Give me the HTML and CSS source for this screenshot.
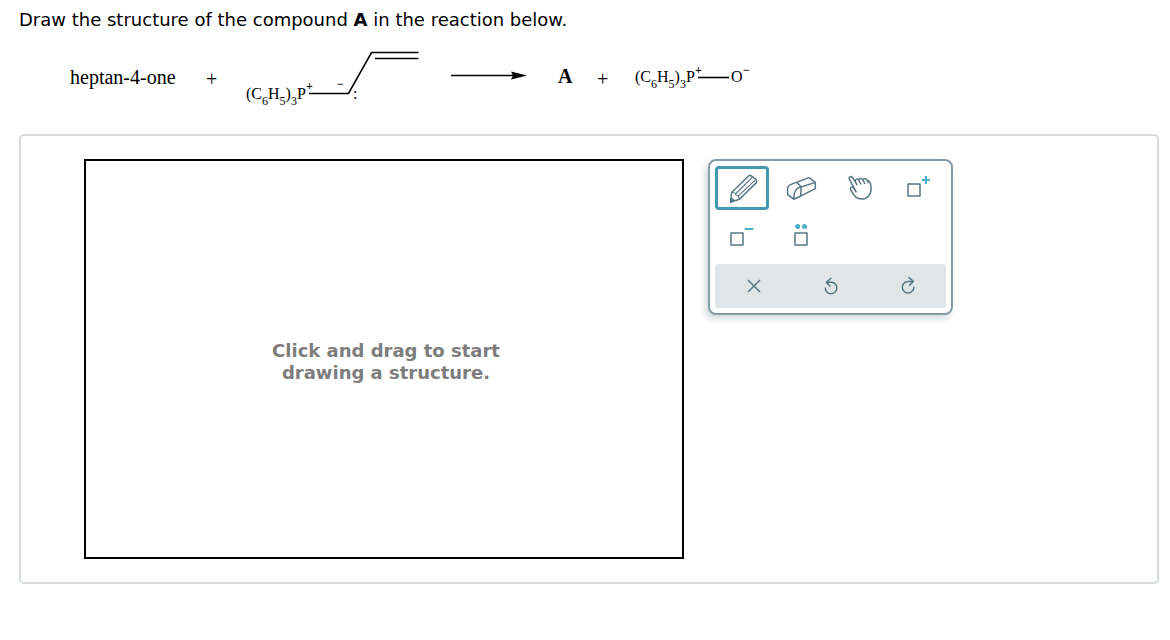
FILE: index.html
```html
<!DOCTYPE html>
<html lang="en">
<head>
    <meta charset="UTF-8">
    <meta name="viewport" content="width=device-width, initial-scale=1.0">
    <title>Draw a structure</title>
    <link rel="stylesheet" href="styles.css">
</head>
<body>
    <p class="question">Draw the structure of the compound <b>A</b> in the reaction below.</p>

    <!-- Reaction scheme -->
    <svg class="reaction" width="700" height="76" viewBox="0 0 700 76">
        <text x="10" y="44">heptan-4-one</text>
        <text x="146" y="46">+</text>

        <!-- Wittig reagent -->
        <text class="formula" x="186" y="59">(C<tspan class="sub" dy="6">6</tspan><tspan dy="-6">H</tspan><tspan class="sub" dy="6">5</tspan><tspan dy="-6">)</tspan><tspan class="sub" dy="6">3</tspan><tspan dy="-6">P</tspan></text>
        <text class="charge" x="246" y="50">+</text>
        <path class="bond" d="M249 53.5H288.5L311.5 12.5H358.5M315 18.5H358.5"/>
        <text class="charge" x="277" y="48">−</text>
        <text class="formula" x="293" y="59">:</text>

        <path class="bond" d="M391 35.5H454"/>
        <path d="M467 35.5L451 31.5L453 35.5L451 39.5Z"/>

        <text class="bold" x="498" y="43">A</text>
        <text x="537" y="46">+</text>

        <!-- Phosphine oxide -->
        <text class="formula" x="575" y="42">(C<tspan class="sub" dy="6">6</tspan><tspan dy="-6">H</tspan><tspan class="sub" dy="6">5</tspan><tspan dy="-6">)</tspan><tspan class="sub" dy="6">3</tspan><tspan dy="-6">P</tspan></text>
        <text class="charge" x="635" y="34">+</text>
        <path class="bond" d="M638 37.5H669"/>
        <text class="formula" x="671" y="42">O</text>
        <text class="charge" x="683" y="34">−</text>
    </svg>

    <main class="panel">
        <div class="canvas">
            <p>Click and drag to start<br>drawing a structure.</p>
        </div>

        <div class="toolbox">
            <div class="tools">
                <button class="tool selected" type="button" aria-label="Pencil">
                    <svg width="48" height="38" viewBox="0 0 48 38">
                        <path d="M12.5 33L13.6 23.5L30.5 7Q31.8 6 33 6.6L37.8 10.2Q39.2 12 38.4 13.6L21.5 30.3L12.5 33Z"/>
                        <path class="thin" d="M13.8 23.5Q17.5 23 17.8 26Q21.2 26.8 21.3 30.3M17.4 25L34.2 8.4M19.8 27.3L37.2 11.2"/>
                        <path class="fill" d="M12.5 33L13 29.8Q15.4 29.9 16 32Z"/>
                    </svg>
                </button>
                <button class="tool" type="button" aria-label="Eraser">
                    <svg width="48" height="38" viewBox="0 0 48 38">
                        <path d="M10.5 21Q10.5 16.6 14 15.4L32 8.6L38.3 13.4V19.7L23.5 27.2L16.7 30.2L10.8 25.6ZM19.8 13.3L24.2 18L38.3 13.4M24.2 18L23.6 27.2M24.2 18C19.5 18.5 16.4 23 16.7 30.2"/>
                    </svg>
                </button>
                <button class="tool" type="button" aria-label="Grab">
                    <svg width="48" height="38" viewBox="0 0 48 38">
                        <path d="M20.4 23.4L13.4 10.4C12.4 8 15.2 6.6 16.6 8.7L21.2 16M19.3 12.8C18.9 9.7 21.6 9.2 22.7 11.2L25 15.5M22.9 11.6C22.8 9.2 25.6 8.7 26.7 10.7L29 15M27 11.2C27.4 9.2 30.3 9.2 31.1 11.3L32.2 14.3M31.2 11.6C33.6 11.1 34.6 14 35 18C35.8 25.4 31 30.3 25.3 30C21 29.8 18.6 27.6 17 24.6L14.7 21C13.5 18.4 16 17 17.5 18.8L20.4 23.4"/>
                    </svg>
                </button>
                <button class="tool" type="button" aria-label="Positive charge">
                    <svg width="48" height="38" viewBox="0 0 48 38">
                        <rect x="13" y="15" width="12" height="12"/>
                        <path class="accent" d="M27 11H35M31 7V15"/>
                    </svg>
                </button>
                <button class="tool" type="button" aria-label="Negative charge">
                    <svg width="48" height="38" viewBox="0 0 48 38">
                        <rect x="13" y="15" width="12" height="12"/>
                        <path class="accent" d="M26.7 11H35.3"/>
                    </svg>
                </button>
                <button class="tool" type="button" aria-label="Lone pair">
                    <svg width="48" height="38" viewBox="0 0 48 38">
                        <rect x="18" y="15" width="12" height="12"/>
                        <circle class="dot" cx="20.7" cy="8.5" r="2.5"/>
                        <circle class="dot" cx="27.5" cy="8.5" r="2.5"/>
                    </svg>
                </button>
            </div>

            <div class="actions">
                <button type="button" aria-label="Clear">
                    <svg width="20" height="20" viewBox="0 0 20 20">
                        <path d="M4 4L16 16M16 4L4 16"/>
                    </svg>
                </button>
                <button type="button" aria-label="Undo">
                    <svg width="20" height="20" viewBox="0 0 20 20">
                        <path d="M10.3 2L5.3 6.2L9.3 10.6M5.3 6.2H11A5.8 5.8 0 1 1 4.3 11.5"/>
                    </svg>
                </button>
                <button type="button" aria-label="Redo">
                    <svg width="20" height="20" viewBox="0 0 20 20">
                        <path d="M10.5 1.2L15.3 5.4L11 9.8M15.3 5.4H10A5.8 5.8 0 1 0 15.9 10.8"/>
                    </svg>
                </button>
            </div>
        </div>
    </main>
</body>
</html>
```
FILE: styles.css
```css
* { box-sizing: border-box; }
body { margin: 0; padding: 8px 11px 20px 19px; background: white; color: black; font-family: Verdana, "DejaVu Sans", sans-serif; }
p { margin: 0; }
.question { font-size: 18px; line-height: 24px; }

/* Reaction */
.reaction { display: block; margin: 8px 0 18px 41px; font-family: "Liberation Serif", serif; font-size: 20px; }
.reaction .bold { font-weight: bold; }
.reaction .formula { font-size: 16px; }
.reaction .sub { font-size: 12px; }
.reaction .charge { font-size: 12px; font-weight: bold; }
.bond { fill: none; stroke: black; stroke-width: 1.6; }

/* Drawing area */
.panel { display: flex; align-items: flex-start; gap: 24px; padding: 23px 63px; border: 2px solid #d5dadb; border-radius: 5px; }
.canvas { display: flex; align-items: center; justify-content: center; width: 600px; min-height: 400px; padding: 6px 0 0 4px; border: 2px solid black; }
.canvas p { color: #7d7d7d; font-size: 18px; font-weight: bold; line-height: 22px; text-align: center; }

/* Tools */
.toolbox { padding: 5px; background: white; border: 2px solid #849ca5; border-radius: 8px; box-shadow: -3px 4px 6px rgba(80, 110, 125, 0.25); }
.tools { display: grid; grid-template-columns: repeat(4, 54px); gap: 5px; margin-bottom: 5px; }
button { display: flex; align-items: center; justify-content: center; margin: 0; padding: 0; background: none; border: 0; cursor: pointer; }
.tool { height: 44px; border: 3px solid transparent; border-radius: 4px; }
.tool.selected { border-color: #4499b0; }
.actions { display: flex; height: 44px; background: #e0e5e7; border-radius: 3px; }
.actions button { flex: 1; }
button svg { display: block; fill: none; stroke: #567784; stroke-width: 1.5; stroke-linejoin: round; }
button .thin { stroke-width: 1.1; }
button .fill { fill: #567784; }
button .accent { stroke: #4bafc9; stroke-width: 2; }
button .dot { fill: #4bafc9; stroke: none; }
```
